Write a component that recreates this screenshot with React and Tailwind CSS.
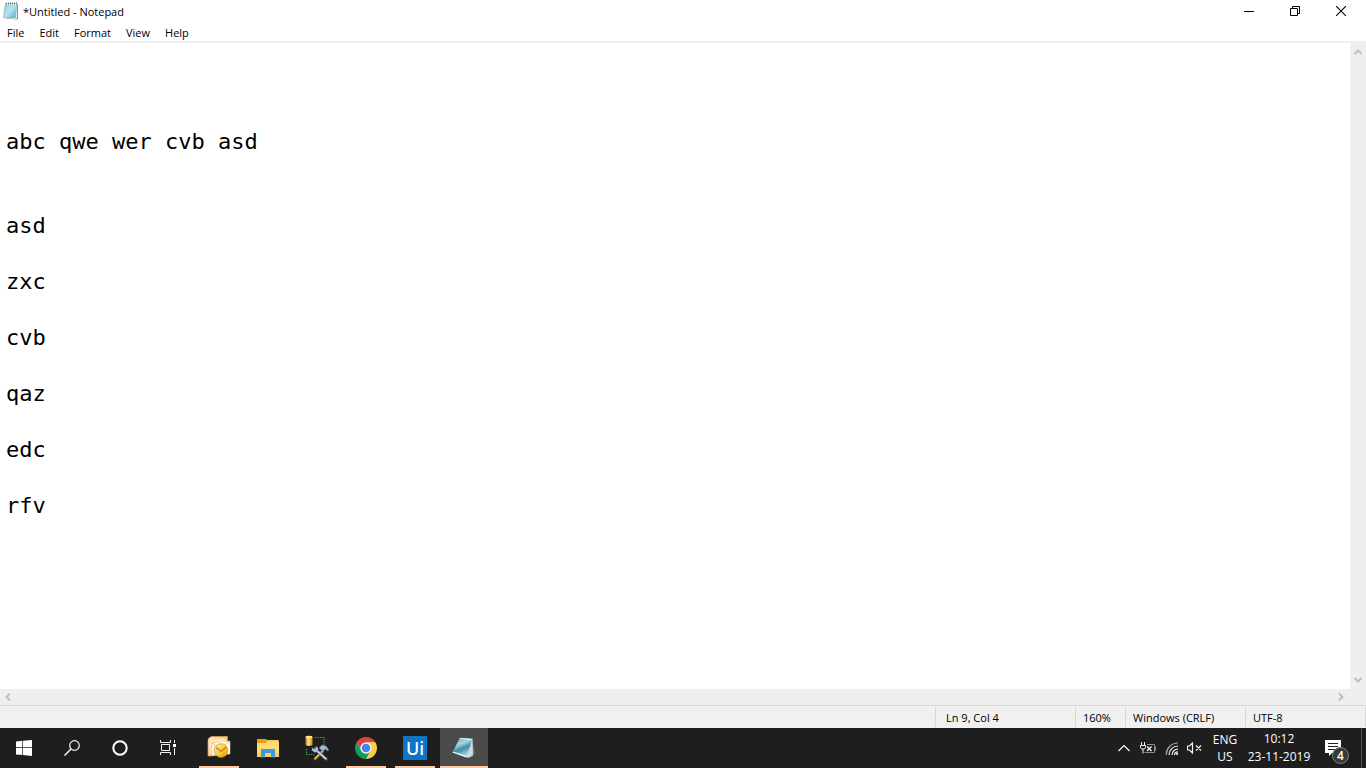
import React, { useState } from 'react';

const INITIAL_TEXT = '\n\n\nabc qwe wer cvb asd\n\n\nasd\n\nzxc\n\ncvb\n\nqaz\n\nedc\n\nrfv';

const MENUS = ['File', 'Edit', 'Format', 'View', 'Help'];

function NotepadSmallIcon() {
  return (
    <svg width="16" height="18" viewBox="0 0 16 18" aria-hidden="true">
      <defs>
        <linearGradient id="pageSmall" x1="0" y1="0" x2="1" y2="1">
          <stop offset="0" stopColor="#8fc9dc" />
          <stop offset="0.5" stopColor="#b9e2ec" />
          <stop offset="1" stopColor="#4ea9c4" />
        </linearGradient>
      </defs>
      <path d="M3 16.5 14.2 17.5 15 16.5 14.8 2.5 13 1.5Z" fill="#8d8161" />
      <path d="M2.2 1.8H14V16.4L12.5 17 1.5 16Z" fill="#e8f4f6" />
      <path d="M2.2 1.8H13.8L12.4 15.8H0.3Z" fill="url(#pageSmall)" stroke="#6ba9bb" strokeWidth="0.5" />
      <path d="M3 2.4H14" stroke="#eef8fa" strokeWidth="1" />
      <path d="M3.5 0.5v2M5.5 0.5v2M7.5 0.5v2M9.5 0.5v2M11.5 0.5v2M13.5 0.5v2" stroke="#48707e" strokeWidth="0.9" />
    </svg>
  );
}

function WindowsIcon() {
  return (
    <svg width="16" height="16" viewBox="0 0 16 16" fill="#fff" aria-hidden="true">
      <path d="M0 1.4 6.3 0.8V7.2H0ZM7 0.7 16 0V7.2H7ZM0 8.1H6.3V15L0 14.4ZM7 8.1H16V16L7 15.1Z" />
    </svg>
  );
}

function SearchIcon() {
  return (
    <svg width="16" height="16" viewBox="0 0 16 16" fill="none" stroke="#f2f2f2" strokeWidth="1.2" aria-hidden="true">
      <circle cx="10.5" cy="5.5" r="4.8" />
      <path d="M7 9 0.5 15.5" strokeWidth="1.5" />
    </svg>
  );
}

function CortanaIcon() {
  return (
    <svg width="16" height="16" viewBox="0 0 16 16" fill="none" aria-hidden="true">
      <circle cx="8" cy="8" r="6.7" stroke="#fff" strokeWidth="2" />
    </svg>
  );
}

function TaskViewIcon() {
  return (
    <svg width="16" height="16" viewBox="0 0 16 16" fill="none" stroke="#f2f2f2" aria-hidden="true">
      <path d="M0.5 0v2.5h10V0M1.5 4.5h8v6h-8zM0.5 15v-2.5h10V15M14.5 0v3M14.5 8v7" />
      <path d="M13 4h3v3h-3z" fill="#fff" stroke="none" />
    </svg>
  );
}

function OutlookIcon() {
  return (
    <svg width="24" height="24" viewBox="0 0 24 24" aria-hidden="true">
      <defs>
        <linearGradient id="olFrame" x1="0" y1="0" x2="1" y2="1">
          <stop offset="0" stopColor="#fff0c8" />
          <stop offset="0.5" stopColor="#f4c981" />
          <stop offset="1" stopColor="#e2952d" />
        </linearGradient>
        <linearGradient id="olFace" x1="0" y1="0" x2="1" y2="1">
          <stop offset="0" stopColor="#fff3a8" />
          <stop offset="0.6" stopColor="#f8c530" />
          <stop offset="1" stopColor="#d9930d" />
        </linearGradient>
      </defs>
      <path d="M5 0.5H20.5V17L4 20H1V4Q1.5 1 5 0.5Z" fill="url(#olFrame)" stroke="#dc9d55" strokeWidth="0.7" />
      <path d="M4 19V9Q4 6 7 6H19V3L5 3Q2.5 4 2.5 8V18Z" fill="#fce5be" />
      <path d="M5 7 23 5V18L5 19.5Z" fill="#fffdf8" stroke="#dccda7" strokeWidth="0.5" />
      <path d="M5 7 14 13 23 5" fill="none" stroke="#eebb66" />
      <circle cx="14" cy="14.5" r="6.8" fill="url(#olFace)" stroke="#d99a20" strokeWidth="0.8" />
      <path d="M9 11.5 14 15.5 19.5 11" fill="none" stroke="#bd7d14" strokeWidth="1.2" />
    </svg>
  );
}

function ExplorerIcon() {
  return (
    <svg width="24" height="24" viewBox="0 0 24 24" aria-hidden="true">
      <path d="M1 3h9l1.500 1.500V8H1Z" fill="#e2a314" />
      <path d="M11 4h11.500v4H11Z" fill="#f8cf58" />
      <path d="M1 7h9l1.500-1.500H23V21H1Z" fill="#ffda72" />
      <path d="M1 17h22v4H1Z" fill="#f8ce5d" />
      <path d="M5 21.500V14q0-1 1-1h12q1 0 1 1v7.500h-4V17H9v4.500Z" fill="#3a9bdf" />
    </svg>
  );
}

function ToolsIcon() {
  return (
    <svg width="24" height="26" viewBox="0 0 24 26" aria-hidden="true">
      <defs>
        <linearGradient id="dbCan" x1="0" y1="0" x2="1" y2="0">
          <stop offset="0" stopColor="#b97c12" />
          <stop offset="0.4" stopColor="#ffe483" />
          <stop offset="1" stopColor="#cf8d16" />
        </linearGradient>
      </defs>
      <path d="M10 2.5h9v8M1.500 14v5.500h8" fill="none" stroke="#3c9949" strokeWidth="1.2" strokeDasharray="1.5 1" />
      <path d="M0.5 2v8q3.500 2 7 0V2Z" fill="url(#dbCan)" />
      <ellipse cx="4" cy="2" rx="3.5" ry="1.3" fill="#ffe78f" />
      <path d="m10 24 8-8" stroke="#8a692c" strokeWidth="2.8" strokeLinecap="round" />
      <path d="m10 23.500 8-8" stroke="#f0c963" strokeWidth="1.4" strokeLinecap="round" />
      <path d="m10 14 11 10" stroke="#647d96" strokeWidth="3" strokeLinecap="round" />
      <path d="m10 14 10.500 9.500" stroke="#ccdce8" strokeWidth="1.6" strokeLinecap="round" />
      <path d="M7 12.500v3l3 2 3-1.500v-3L11 11v3l-2 .5Z" fill="#bdcdda" stroke="#607b94" strokeWidth="0.5" />
      <path d="m14 13 3-3 4 1 3 4-1.500 1-2-2-3 2Z" fill="#a8bccd" stroke="#526e88" strokeWidth="0.6" />
    </svg>
  );
}

function ChromeIcon() {
  return (
    <svg width="24" height="24" viewBox="0 0 48 48" aria-hidden="true">
      <circle cx="24" cy="24" r="21" fill="#fff" />
      <path d="M4.950 13A22 22 0 0 1 43.050 13H24A11 11 0 0 0 14.500 29.500Z" fill="#db4437" />
      <path d="M43.050 13A22 22 0 0 1 24 46L33.500 29.500A11 11 0 0 0 24 13Z" fill="#ffcd40" />
      <path d="M24 46A22 22 0 0 1 4.950 13L14.500 29.500A11 11 0 0 0 33.500 29.500Z" fill="#0f9d58" />
      <circle cx="24" cy="24" r="11" fill="#f1f1f1" />
      <circle cx="24" cy="24" r="8.5" fill="#4285f4" />
    </svg>
  );
}

function NotepadIcon() {
  return (
    <svg width="24" height="24" viewBox="0 0 24 24" aria-hidden="true">
      <defs>
        <linearGradient id="pageLarge" x1="0" y1="0" x2="0.4" y2="1">
          <stop offset="0" stopColor="#4f8f9f" />
          <stop offset="0.4" stopColor="#a6d9e1" />
          <stop offset="0.65" stopColor="#3f8d9f" />
          <stop offset="1" stopColor="#a5dde4" />
        </linearGradient>
      </defs>
      <path d="M20 4 23 17.500 18 21 16 21Z" fill="#8d7342" />
      <path d="m20.500 2.500.5 17-4.500 2.500L10 18Z" fill="#c9dcdf" />
      <path d="M8 1.500 20.500 2.500 14.500 21.500 0.500 16.500Z" fill="url(#pageLarge)" />
      <path d="m0.500 16.500 14 5 .5-1.200L1 15.500Z" fill="#effafa" />
      <path d="m8 2.500 12 1" stroke="#dff4f5" strokeWidth="1.2" />
      <path d="m8 1 12 1" stroke="#31525b" strokeDasharray="0.8 0.8" />
    </svg>
  );
}

function ScrollArrow({ d }) {
  return (
    <svg width="8" height="8" viewBox="0 0 8 8" fill="none" stroke="#bfbfbf" strokeWidth="2" aria-hidden="true">
      <path d={d} />
    </svg>
  );
}

function TaskButton({ label, open, active, children }) {
  return (
    <button
      type="button"
      aria-label={label}
      className={`flex h-10 w-12 flex-col items-center ${active ? 'bg-[#4b4b4b]' : 'hover:bg-[#333]'}`}
    >
      <span className={`flex flex-1 items-center justify-center ${open ? 'pt-0.5' : ''}`}>{children}</span>
      {open && <span className={`h-[2px] shrink-0 bg-[#ffcba4] ${active ? 'w-full' : 'w-10'}`} />}
    </button>
  );
}

function TitleBar() {
  return (
    <header className="flex h-[22px] items-center">
      <div className="flex flex-1 items-center gap-1 pl-[3px]">
        <NotepadSmallIcon />
        <h1 className="pt-px text-[11px] leading-4">*Untitled - Notepad</h1>
      </div>
      <div className="flex h-full pr-[2px] pb-px">
        <button type="button" aria-label="Minimize" className="flex h-full w-[46px] items-center justify-center">
          <svg width="10" height="10" viewBox="0 0 10 10"><path d="M0 5.500h10" stroke="#000" /></svg>
        </button>
        <button type="button" aria-label="Restore" className="flex h-full w-[46px] items-center justify-center">
          <svg width="10" height="10" viewBox="0 0 10 10" fill="none" stroke="#000">
            <path d="M0.500 2.500h7v7h-7zM2.500 2.500v-2h7v7h-2" />
          </svg>
        </button>
        <button type="button" aria-label="Close" className="flex h-full w-[46px] items-center justify-center">
          <svg width="10" height="10" viewBox="0 0 10 10"><path d="m0 0 10 10M10 0 0 10" stroke="#000" strokeWidth="1.1" /></svg>
        </button>
      </div>
    </header>
  );
}

function Editor() {
  const [text, setText] = useState(INITIAL_TEXT);

  return (
    <main className="flex min-h-0 flex-1 flex-col border-t-2 border-[#efefef]">
      <div className="flex min-h-0 flex-1">
        <textarea
          aria-label="Document text"
          spellCheck={false}
          wrap="off"
          value={text}
          onChange={(e) => setText(e.target.value)}
          className="min-w-0 flex-1 resize-none overflow-hidden px-[6px] py-px font-['DejaVu_Sans_Mono',monospace] text-[22px] leading-7 outline-none"
        />
        <div className="flex w-4 flex-col items-center justify-between bg-[#efefef] py-[5px]">
          <button type="button" aria-label="Scroll up"><ScrollArrow d="m0.500 6 3.500-3.500L7.500 6" /></button>
          <button type="button" aria-label="Scroll down"><ScrollArrow d="m0.500 2 3.500 3.500L7.500 2" /></button>
        </div>
      </div>
      <div className="flex h-4 items-center justify-between bg-[#efefef] pr-[21px] pl-1">
        <button type="button" aria-label="Scroll left"><ScrollArrow d="M6 0.500 2.500 4 6 7.500" /></button>
        <button type="button" aria-label="Scroll right"><ScrollArrow d="M2 0.500 5.500 4 2 7.500" /></button>
      </div>
    </main>
  );
}

function StatusBar() {
  return (
    <footer className="flex h-[23px] justify-end border-t border-[#d7d7d7] bg-[#f0f0f0] pt-px pb-px text-[11px] leading-[22px]">
      <span className="w-[140px] border-l border-[#d7d7d7] pl-[10px]">Ln 9, Col 4</span>
      <span className="w-[50px] border-l border-[#d7d7d7] pl-[7px]">160%</span>
      <span className="w-[120px] border-l border-[#d7d7d7] pl-[7px]">Windows (CRLF)</span>
      <span className="w-[121px] border-x border-[#d7d7d7] pl-[7px]">UTF-8</span>
    </footer>
  );
}

function Taskbar() {
  return (
    <nav aria-label="Taskbar" className="flex h-10 shrink-0 justify-between bg-[#1e1e1e] text-white">
      <div className="flex">
        <TaskButton label="Start"><WindowsIcon /></TaskButton>
        <TaskButton label="Search"><SearchIcon /></TaskButton>
        <TaskButton label="Cortana"><CortanaIcon /></TaskButton>
        <TaskButton label="Task View"><TaskViewIcon /></TaskButton>
        <div className="flex gap-px pl-[3px]">
          <TaskButton label="Outlook" open><OutlookIcon /></TaskButton>
          <TaskButton label="File Explorer"><ExplorerIcon /></TaskButton>
          <TaskButton label="Database tools"><ToolsIcon /></TaskButton>
          <TaskButton label="Chrome" open><ChromeIcon /></TaskButton>
          <TaskButton label="UiPath" open>
            <span className="flex size-6 items-center justify-center bg-[#0d74c6] font-['Noto_Sans',sans-serif] text-[18px] leading-6 font-medium">Ui</span>
          </TaskButton>
          <TaskButton label="Notepad" open active><NotepadIcon /></TaskButton>
        </div>
      </div>

      {/* System tray */}
      <div className="flex items-center">
        <button type="button" aria-label="Show hidden icons" className="flex w-6 justify-center">
          <svg width="12" height="8" viewBox="0 0 12 8" fill="none" stroke="#fff" strokeWidth="1.2"><path d="m.5 7 5.500-5.500L11.500 7" /></svg>
        </button>
        <button type="button" aria-label="Battery" className="flex w-6 justify-center">
          <svg width="16" height="14" viewBox="0 0 16 14" fill="none" stroke="#f2f2f2">
            <path d="M1.500 1v3M4.500 1v3M0.500 4.500h5v2l-1 1.500h-3l-1-1.500zM3 8v4.500" />
            <path d="M7 3.500h7.500v8H4.500M15.500 5.500v4" stroke="#8d8d8d" />
            <path d="m7 5.500 4.500 4.500M11.500 5.500 7 10" strokeWidth="1.4" />
          </svg>
        </button>
        <button type="button" aria-label="Network" className="flex w-6 justify-center">
          <svg width="14" height="14" viewBox="0 0 14 14" fill="none" stroke="#f2f2f2" strokeWidth="1.2">
            <path d="M1.300 14A11.500 11.500 0 0 1 13 2" stroke="#a5a5a5" />
            <path d="M4 14A9 9 0 0 1 13 5M7 14A6 6 0 0 1 13 8" />
            <path d="M9.500 14A3.500 3.500 0 0 1 13 10.800" />
            <circle cx="12" cy="13" r="1" fill="#fff" stroke="none" />
          </svg>
        </button>
        <button type="button" aria-label="Volume muted" className="flex w-5 justify-center">
          <svg width="15" height="12" viewBox="0 0 15 12" fill="none" stroke="#f2f2f2" strokeWidth="1.2">
            <path d="M0.500 4v4h2l3 3V1l-3 3zM9 3.500l5 5M14 3.500l-5 5" />
          </svg>
        </button>
        <button type="button" aria-label="Language" className="flex w-[42px] flex-col items-center text-[12px] leading-[17px]">
          <span>ENG</span>
          <span>US</span>
        </button>
        <button type="button" aria-label="Date and time" className="flex w-[66px] flex-col items-center pb-px text-[12px] leading-[18px]">
          <span>10:12</span>
          <span>23-11-2019</span>
        </button>
        <button type="button" aria-label="Notifications" className="relative flex h-10 w-[49px] items-start pt-3 pl-[13px]">
          <svg width="16" height="16" viewBox="0 0 16 16">
            <path d="M0 0h16v13H7l-3 3v-3H0Z" fill="#fff" />
            <path d="M3 3.500h10M3 6.500h10M3 9.500h7" stroke="#1e1e1e" />
          </svg>
          <span className="absolute top-[19px] left-5 flex size-[17px] items-center justify-center rounded-full border border-[#858585] bg-[#383838] text-[12px] leading-4 font-semibold">4</span>
        </button>
        <button type="button" aria-label="Show desktop" className="h-10 w-[5px] border-l border-[#555]" />
      </div>
    </nav>
  );
}

export default function App() {
  return (
    <div className="flex h-screen flex-col overflow-hidden bg-white font-['Open_Sans',sans-serif] text-black">
      <TitleBar />
      <div className="flex h-[19px] items-center gap-px pt-0.5 text-[11px] leading-4" role="menubar">
        {MENUS.map((menu) => (
          <button key={menu} type="button" role="menuitem" className="px-[7px]">
            {menu}
          </button>
        ))}
      </div>
      <Editor />
      <StatusBar />
      <Taskbar />
    </div>
  );
}
